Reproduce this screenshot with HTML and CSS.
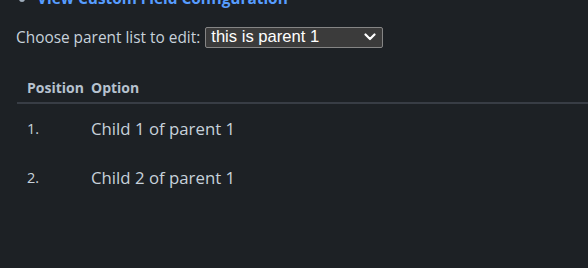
FILE: index.html
```html
<!DOCTYPE html>
<html>
<head>
<meta charset="utf-8">
<link rel="stylesheet" href="styles.css">
</head>
<body>
<div class="page">
  <ul class="links">
    <li><a href="#">View Custom Field Configuration</a></li>
  </ul>
  <form class="chooser">
    <label for="parent">Choose parent list to edit:</label>
    <div class="select">
      <span class="select-value">this is parent 1</span>
      <svg class="chev" width="12" height="8" viewBox="0 0 12 8"><path d="M1.5 1.5 L6 6 L10.5 1.5" fill="none" stroke="#fff" stroke-width="2.2" stroke-linecap="round" stroke-linejoin="round"/></svg>
    </div>
  </form>
  <table class="options">
    <thead>
      <tr><th class="pos">Position</th><th>Option</th></tr>
    </thead>
    <tbody>
      <tr><td class="pos">1.</td><td class="opt">Child 1 of parent 1</td></tr>
      <tr><td class="pos">2.</td><td class="opt">Child 2 of parent 1</td></tr>
    </tbody>
  </table>
</div>
</body>
</html>
```
FILE: styles.css
```css
html, body {
  margin: 0;
  background: #1d2125;
  height: 100%;
}
.page {
  font-family: "Open Sans", "Noto Sans", sans-serif;
  color: #c7d1db;
  padding: 0 0 0 16px;
  overflow: hidden;
}
.links {
  margin: -11px 0 0 0;
  padding: 0 0 0 21px;
  list-style: disc;
  color: #9fadbc;
  height: 18px;
  line-height: 18px;
}
.links a {
  color: #579dff;
  font-weight: 700;
  font-size: 15.4px;
  text-decoration: none;
}
.chooser {
  display: flex;
  align-items: center;
  margin: 20px 0 0 0;
  height: 20px;
}
.chooser label {
  font-size: 15.4px;
  margin-right: 5px;
}
.select {
  box-sizing: border-box;
  width: 178px;
  height: 21px;
  background: #3b3b3b;
  border: 1px solid #858585;
  border-radius: 2px;
  display: flex;
  align-items: center;
  justify-content: space-between;
  padding: 0 6px 0 5px;
  font-family: "Liberation Sans", Arial, sans-serif;
  font-size: 16.6px;
  color: #fff;
}
.options {
  border-collapse: collapse;
  margin-top: 25px;
  margin-left: 1px;
  width: 700px;
}
.options th {
  text-align: left;
  font-size: 14px;
  font-weight: 700;
  color: #b6c2cf;
  padding: 6px 0 5px 0;
  border-bottom: 2px solid #383d45;
}
.options th.pos, .options td.pos {
  padding-left: 10px;
  width: 64px;
}
.options td {
  height: 49px;
  padding: 0;
  vertical-align: middle;
}
.options td.pos {
  font-size: 14.5px;
  color: #c7d1db;
}
.options td.opt {
  font-size: 16.8px;
  color: #c7d1db;
}
```
